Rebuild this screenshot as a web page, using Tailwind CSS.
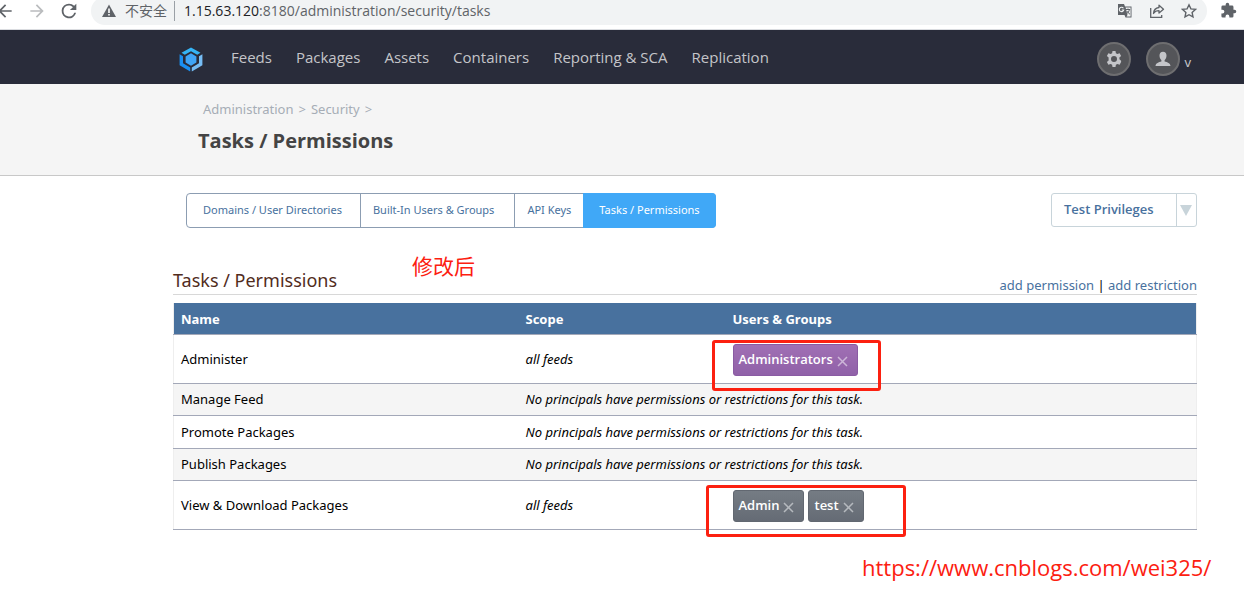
<!DOCTYPE html>
<html lang="en">

<head>
    <meta charset="UTF-8">
    <meta name="viewport" content="width=device-width, initial-scale=1.0">
    <script src="https://cdn.jsdelivr.net/npm/@tailwindcss/browser@4"></script>
    <title>Tasks / Permissions</title>
</head>

<body class="min-h-screen bg-white font-['Noto_Sans','Noto_Sans_CJK_SC',sans-serif] text-[13px] text-black">

    <!-- Browser toolbar -->
    <div class="flex items-start h-[30px] border-b border-[#dadce0] overflow-hidden font-['Open_Sans','Noto_Sans_CJK_SC',sans-serif] text-sm text-[#5f6368]">
        <div class="flex items-center h-[22px] w-[91px] shrink-0">
            <button aria-label="Back" class="-ml-[5px] shrink-0">
                <svg class="size-5" viewBox="0 0 24 24" fill="currentColor"><path d="M20 11H7.83l5.59-5.59L12 4l-8 8 8 8 1.41-1.41L7.83 13H20v-2z"/></svg>
            </button>
            <button aria-label="Forward" class="ml-3 shrink-0 text-[#babcbe]">
                <svg class="size-5" viewBox="0 0 24 24" fill="currentColor"><path d="M12 4l-1.41 1.41L16.17 11H4v2h12.17l-5.58 5.59L12 20l8-8z"/></svg>
            </button>
            <button aria-label="Reload" class="ml-[11px] shrink-0">
                <svg class="size-[22px]" viewBox="0 0 24 24" fill="currentColor"><path d="M17.65 6.35A7.96 7.96 0 0 0 12 4a8 8 0 1 0 7.73 10h-2.08A6 6 0 1 1 12 6c1.66 0 3.14.69 4.22 1.78L13 11h7V4l-2.35 2.35z"/></svg>
            </button>
        </div>
        <div class="flex items-center grow h-7 -mt-[3px] pl-[10px] pr-[10px] rounded-full bg-[#f1f3f4]">
            <svg class="size-4 shrink-0" viewBox="0 0 16 16"><path d="M8 1.5 15 14H1z" fill="#5f6368"/><path d="M7.2 5.500h1.600v4.500h-1.600zM7.200 11h1.600v1.600h-1.600z" fill="#fff"/></svg>
            <span class="ml-2">不安全</span>
            <span class="w-px h-5 ml-[7px] mr-[9px] bg-[#9aa0a6]"></span>
            <span class="grow"><span class="text-[#202124]">1.15.63.120</span>:8180/administration/security/tasks</span>
            <button aria-label="Translate">
                <svg class="size-4" viewBox="0 0 16 16"><path d="M1 1h6l1 2.500h6.500v11H8.500L7.500 12H1z" fill="#5f6368"/><path d="M8.600 4.500h5v9H9.500l1-1.500z" fill="#f1f3f4"/><path d="M6.400 5.200A2.200 2.200 0 1 0 6.700 7H4.700" stroke="#f1f3f4" stroke-width="1.100" fill="none"/><path d="M9 6.500h4.200M11 5.500v1M12.400 6.500c-.4 2-1.400 3.500-3 4.500M9.800 8c.8 1.500 2 2.500 3.200 3.200" stroke="#5f6368" fill="none"/></svg>
            </button>
            <button aria-label="Share" class="ml-4">
                <svg class="size-4" viewBox="0 0 16 16" fill="none" stroke="#5f6368" stroke-width="1.300"><path d="M1.700 5v9.300h11V12"/><path d="M10 2.200 14.500 6.200 10 10V7.700C7.500 7.700 5.700 8.500 4.500 10.500 4.700 7.200 6.700 4.900 10 4.500z" stroke-linejoin="round"/></svg>
            </button>
            <button aria-label="Bookmark" class="ml-4">
                <svg class="size-4" viewBox="0 0 16 16" fill="none" stroke="#5f6368" stroke-width="1.400"><path d="m8 1.800 1.900 4.100 4.500.5-3.300 3 .9 4.500L8 11.700l-4 2.200.9-4.500-3.300-3 4.500-.5z"/></svg>
            </button>
        </div>
        <button aria-label="Extensions" class="ml-[13px] mr-[7px] mt-[2px] shrink-0">
            <svg class="size-[17px]" viewBox="0 0 24 24" fill="currentColor"><path d="M20.500 11H19V7a2 2 0 0 0-2-2h-4V3.500a2.500 2.500 0 0 0-5 0V5H4a2 2 0 0 0-2 2v3.800h1.500a2.700 2.700 0 0 1 0 5.400H2V20a2 2 0 0 0 2 2h3.800v-1.500a2.700 2.700 0 0 1 5.400 0V22H17a2 2 0 0 0 2-2v-4h1.500a2.500 2.500 0 0 0 0-5z"/></svg>
        </button>
    </div>

    <!-- Site header -->
    <header class="flex items-center h-[54px] pl-[178px] pr-[53px] bg-[#292c3a] text-[#c4c5c9]">
        <a href="#" aria-label="Home" class="mt-1">
            <svg class="size-[26px]" viewBox="0 0 26 26">
                <path d="M3.500 6.800 13 1.400l9.500 5.400-3.300 2L13 5.200 6.800 8.800z" fill="#35b4f5"/>
                <path d="M1.600 8.300 5 10.300v6.900l7.200 4.200v4L1.600 19.300z" fill="#1a90f2"/>
                <path d="M24.400 8.300 21 10.300v6.900l-7.200 4.200v4l10.600-6.100z" fill="#76bdf5"/>
                <path d="m13 7.300 5.400 3.100v6.200L13 19.700 7.600 16.600v-6.200z" fill="#3fa5f7"/>
            </svg>
        </a>
        <nav class="flex grow gap-6 ml-[27px] font-['Open_Sans',sans-serif] text-[15px]">
            <a href="#">Feeds</a>
            <a href="#">Packages</a>
            <a href="#">Assets</a>
            <a href="#">Containers</a>
            <a href="#">Reporting &amp; SCA</a>
            <a href="#">Replication</a>
        </nav>
        <button aria-label="Settings" class="flex items-center justify-center size-[34px] mt-1 rounded-full border-2 border-[#6e6e70] bg-[#545559]">
            <svg class="size-4" viewBox="0 0 16 16" fill="#c4c5c9" fill-rule="evenodd"><path d="M6.500 0h3l.4 2.200 1.500.9 2.200-.8 1.500 2.600L13.400 6.400v1.800l1.700 1.500v1.400l-1.500 2.600-2.200-.8-1.500.9L9.500 16h-3l-.4-2.200-1.500-.9-2.200.8L.9 11.100l1.700-1.500V6.400L.9 4.900l1.500-2.600 2.200.8 1.500-.9zM8 5a3 3 0 1 0 0 6 3 3 0 0 0 0-6z"/></svg>
        </button>
        <button aria-label="Account" class="flex items-center mt-1 ml-[15px]">
            <span class="flex items-center justify-center size-[34px] rounded-full border-2 border-[#6e6e70] bg-[#545559]">
                <svg class="size-4" viewBox="0 0 16 16" fill="#c4c5c9"><path d="M8 .8c2.200 0 3.500 1.500 3.500 3.800 0 1.900-.8 3.800-1.900 4.700v1.300c2.800.7 5.600 1.500 5.900 4.400H.5c.3-2.900 3.100-3.700 5.900-4.400V9.300C5.300 8.400 4.500 6.500 4.500 4.600 4.500 2.300 5.800.8 8 .8z"/></svg>
            </span>
            <span class="ml-1 mt-2">v</span>
        </button>
    </header>

    <!-- Page title -->
    <div class="h-[92px] pt-[15px] border-b border-[#c8c8c8] bg-[#f5f5f5]">
        <div class="flex gap-[5px] ml-[203px] leading-5 text-[#a6adb6]">
            <a href="#">Administration</a><span>&gt;</span><a href="#">Security</a><span>&gt;</span>
        </div>
        <h1 class="ml-[198px] mt-2 font-['Open_Sans',sans-serif] text-xl leading-7 font-bold text-[#444]">Tasks / Permissions</h1>
    </div>

    <main class="relative ml-[173px] mr-[47px] pt-[17px] pb-14">
        <div class="flex items-start justify-between ml-[13px]">
            <div class="flex h-[35px] text-[11px] text-[#48719e] rounded border border-[#8c9db2]">
                <a href="#" class="flex items-center pl-4 pr-[18px] border-r border-[#8c9db2]">Domains / User Directories</a>
                <a href="#" class="flex items-center pl-3 pr-5 border-r border-[#8c9db2]">Built-In Users &amp; Groups</a>
                <a href="#" class="flex items-center px-3">API Keys</a>
                <a href="#" class="flex items-center px-4 -my-px -mr-px rounded-r bg-[#40a8f7] text-white">Tasks / Permissions</a>
            </div>
            <div class="flex h-[34px] rounded-[3px] border border-[#c8d4da]">
                <button class="w-[124px] pl-3 text-left font-['Open_Sans',sans-serif] font-semibold text-[#48719e]">Test Privileges</button>
                <button aria-label="More" class="flex items-center w-5 pl-[3px] border-l border-[#c8d4da]">
                    <svg class="w-3 h-[11px]" viewBox="0 0 12 11" fill="#c8d4da"><path d="M0 0h12L6 11z"/></svg>
                </button>
            </div>
        </div>

        <div class="flex items-end justify-between mt-[39px] border-b border-[#d8d8d8]">
            <h2 class="text-lg leading-[27px] text-[#512c1c]">Tasks / Permissions</h2>
            <div class="mb-px leading-4"><a href="#" class="text-[#48719e]">add permission</a> | <a href="#" class="text-[#48719e]">add restriction</a></div>
        </div>

        <table class="w-full mt-2 table-fixed border-collapse border-l border-r border-[#eeeeee] text-left">
            <thead class="bg-[#48719e] text-white">
                <tr class="h-[31px] border-b border-[#a3a8b8]">
                    <th class="w-[345px] px-[7px] pt-[2px]">Name</th>
                    <th class="w-[207px] px-[7px] pt-[2px]">Scope</th>
                    <th class="px-[7px] pt-[2px]">Users &amp; Groups</th>
                </tr>
            </thead>
            <tbody>
                <tr class="h-[49px] border-b border-[#a3a8b8]">
                    <td class="px-[7px] pt-[2px]">Administer</td>
                    <td class="px-[7px] pt-[2px] italic">all feeds</td>
                    <td class="px-[7px] pt-[2px]">
                        <div class="flex gap-1 font-['Open_Sans',sans-serif] font-semibold text-white">
                            <span class="flex items-center h-8 pl-[5px] pr-[9px] rounded-[3px] border border-[#8a5ba3] bg-linear-to-b from-[#a070b4] to-[#9061a8]">Administrators
                                <button aria-label="Remove Administrators" class="ml-1 mt-1"><svg class="size-[11px]" viewBox="0 0 11 11" stroke="#cdb6d8" stroke-width="1.500"><path d="m1 1 9 9M10 1l-9 9"/></svg></button>
                            </span>
                        </div>
                    </td>
                </tr>
                <tr class="h-8 border-b border-[#a3a8b8] bg-[#f5f5f5]">
                    <td class="px-[7px] pt-[2px]">Manage Feed</td>
                    <td class="px-[7px] pt-[2px] italic" colspan="2">No principals have permissions or restrictions for this task.</td>
                </tr>
                <tr class="h-[33px] border-b border-[#a3a8b8]">
                    <td class="px-[7px] pt-[2px]">Promote Packages</td>
                    <td class="px-[7px] pt-[2px] italic" colspan="2">No principals have permissions or restrictions for this task.</td>
                </tr>
                <tr class="h-8 border-b border-[#a3a8b8] bg-[#f5f5f5]">
                    <td class="px-[7px] pt-[2px]">Publish Packages</td>
                    <td class="px-[7px] pt-[2px] italic" colspan="2">No principals have permissions or restrictions for this task.</td>
                </tr>
                <tr class="h-[49px] border-b border-[#a3a8b8]">
                    <td class="px-[7px] pt-[2px]">View &amp; Download Packages</td>
                    <td class="px-[7px] pt-[2px] italic">all feeds</td>
                    <td class="px-[7px] pt-[2px]">
                        <div class="flex gap-1 font-['Open_Sans',sans-serif] font-semibold text-white">
                            <span class="flex items-center h-8 pl-[5px] pr-[9px] rounded-[3px] border border-[#626871] bg-linear-to-b from-[#757c84] to-[#656b75]">Admin
                                <button aria-label="Remove Admin" class="ml-1 mt-1"><svg class="size-[11px]" viewBox="0 0 11 11" stroke="#b5b9be" stroke-width="1.500"><path d="m1 1 9 9M10 1l-9 9"/></svg></button>
                            </span>
                            <span class="flex items-center h-8 pl-[5px] pr-[9px] rounded-[3px] border border-[#626871] bg-linear-to-b from-[#757c84] to-[#656b75]">test
                                <button aria-label="Remove test" class="ml-1 mt-1"><svg class="size-[11px]" viewBox="0 0 11 11" stroke="#b5b9be" stroke-width="1.500"><path d="m1 1 9 9M10 1l-9 9"/></svg></button>
                            </span>
                        </div>
                    </td>
                </tr>
            </tbody>
        </table>

        <!-- Red markup -->
        <div class="absolute left-[539px] top-[164px] w-[169px] h-[51px] rounded-[3px] border-3 border-[#fc2010]"></div>
        <div class="absolute left-[533px] top-[309px] w-[200px] h-[52px] rounded-[3px] border-3 border-[#fc2010]"></div>
        <p class="absolute left-[239px] top-[76px] text-[21px] leading-7 text-[#fc2010]">修改后</p>
        <p class="absolute left-[689px] top-[377px] font-['Open_Sans',sans-serif] text-[22px] leading-7 text-[#fc2010]">https://www.cnblogs.com/wei325/</p>
    </main>

</body>

</html>
